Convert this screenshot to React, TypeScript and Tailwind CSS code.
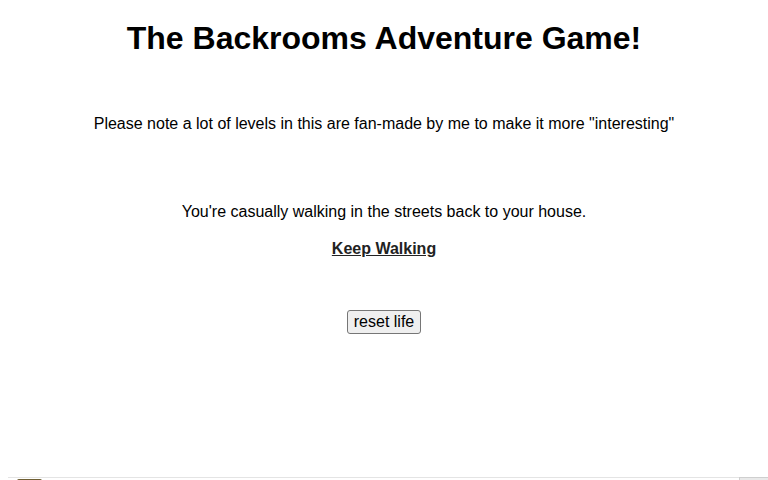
export default function App() {
  return (
    <div
      className="relative h-[480px] w-[768px] overflow-hidden bg-white text-black"
      style={{ fontFamily: '"Liberation Sans", Arial, sans-serif' }}
    >
      <div className="flex flex-col items-center text-center">
        <h1 className="mt-[20px] text-[32px] font-bold leading-[37px]">
          The Backrooms Adventure Game!
        </h1>
        <p className="mt-[58px] text-[16px] leading-[18px]">
          Please note a lot of levels in this are fan-made by me to make it more &quot;interesting&quot;
        </p>
        <p className="mt-[70px] text-[16px] leading-[18px]">
          You&apos;re casually walking in the streets back to your house.
        </p>
        <a href="#" className="mt-[19px] text-[16px] font-bold leading-[18px] text-[#222] underline">
          Keep Walking
        </a>
        <button className="mt-[52px] rounded-[3px] border border-[#767676] bg-[#efefef] px-[6px] py-[2px] text-[16px] leading-[18px] text-black">
          reset life
        </button>
      </div>

      {/* footer strip peeking in at the bottom edge */}
      <div className="absolute left-0 top-[477px] flex w-[768px]">
        <div className="ml-[8px] flex h-[40px] w-[731px] items-start border-t border-[#e4e4e4] bg-white">
          <div className="ml-[9px] mt-[1px] h-[24px] w-[25px] rounded-[2px] bg-[#6f5f33]" />
          <span className="ml-[15px] mt-[1px] text-[15px] leading-[16px] text-[#111]">
            the backrooms adventure
          </span>
        </div>
        <div className="h-[40px] w-[29px] border-l border-t border-[#cfcfcf] bg-[#e9e9e9]" />
      </div>
    </div>
  );
}
